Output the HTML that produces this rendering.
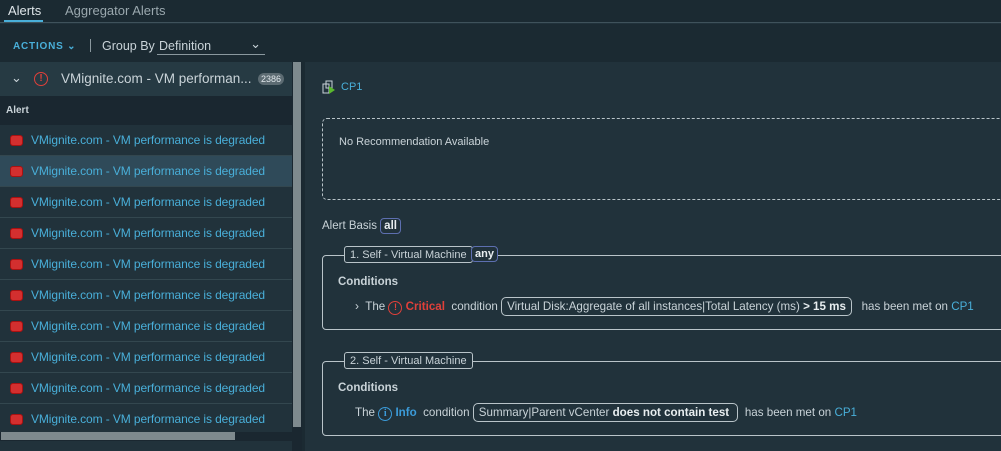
<!DOCTYPE html>
<html><head><meta charset="utf-8"><style>
*{box-sizing:border-box;margin:0;padding:0}
body{width:1001px;height:451px;overflow:hidden;background:#21323b;font-family:"Liberation Sans",sans-serif;color:#c9d3d8;font-size:12px;position:relative}
.abs{position:absolute}
.link{color:#49afd9}
.row{position:absolute;left:0;width:292px;height:31px;border-bottom:1px solid #33474f;background:#21323b}
.row .sq{position:absolute;left:10px;top:10px;width:13px;height:11px;background:#d32f2f;border-radius:3px;border:1px solid #a11}
.row span{position:absolute;left:31px;top:8px;font-size:12px;color:#49afd9;letter-spacing:-.1px}
.box{position:absolute;border:1px solid #b9c4c9;border-radius:4px}
.lbl{position:absolute;border:1px solid #b9c4c9;border-radius:3px;background:#21323b;font-size:11px;padding:1px 5px;color:#c9d3d8;height:17px;line-height:14px}
.pill{border:1px solid #b9c4c9;border-radius:5px;padding:2px 5px}
b{color:#e8eef0}
</style></head><body>
<div class="abs" style="left:0;top:0;width:1001px;height:23px;background:#1b2a32;border-bottom:1px solid #3f525b"></div>
<div class="abs" style="left:8px;top:3px;font-size:13px;color:#dfe6ea">Alerts</div>
<div class="abs" style="left:4px;top:20px;width:39px;height:2px;background:#49afd9"></div>
<div class="abs" style="left:65px;top:3px;font-size:13px;color:#9aa8ae">Aggregator Alerts</div>
<div class="abs" style="left:0;top:24px;width:1001px;height:38px;background:#1b2a32"></div>
<div class="abs" style="left:13px;top:41px;font-size:10px;font-weight:bold;letter-spacing:.8px;color:#49afd9">ACTIONS ⌄</div>
<div class="abs" style="left:90px;top:39px;width:1px;height:13px;background:#8a989e"></div>
<div class="abs" style="left:102px;top:39px;font-size:12.5px;color:#c9d3d8">Group By</div>
<div class="abs" style="left:157px;top:39px;width:108px;height:16px;border-bottom:1px solid #8a989e;font-size:12.5px;padding-left:2px">Definition<span style="position:absolute;right:4px;top:-3px;font-size:13px">⌄</span></div>
<div class="abs" style="left:0;top:62px;width:292px;height:34px;background:#263a43"></div>
<div class="abs" style="left:11px;top:70px;font-size:13px;color:#c9d3d8">⌄</div>
<div class="abs" style="left:34px;top:72px;width:14px;height:14px;border:1.5px solid #e0403a;border-radius:50%;color:#e0403a;font-size:10px;font-weight:bold;text-align:center;line-height:11px">!</div>
<div class="abs" style="left:61px;top:71px;font-size:13.5px;color:#c9d3d8">VMignite.com - VM performan...</div>
<div class="abs" style="left:258px;top:73px;width:26px;height:12px;border-radius:6px;background:#5c6b72;color:#dfe6ea;font-size:9px;text-align:center;line-height:12px">2386</div>
<div class="abs" style="left:0;top:96px;width:292px;height:29px;background:#1a2730"></div>
<div class="abs" style="left:6px;top:105px;font-size:10px;font-weight:bold;color:#c9d3d8">Alert</div>
<div class="row" style="top:125px"><i class="sq"></i><span>VMignite.com - VM performance is degraded</span></div>
<div class="row" style="top:156px;background:#2f4a59"><i class="sq"></i><span>VMignite.com - VM performance is degraded</span></div>
<div class="row" style="top:187px"><i class="sq"></i><span>VMignite.com - VM performance is degraded</span></div>
<div class="row" style="top:218px"><i class="sq"></i><span>VMignite.com - VM performance is degraded</span></div>
<div class="row" style="top:249px"><i class="sq"></i><span>VMignite.com - VM performance is degraded</span></div>
<div class="row" style="top:280px"><i class="sq"></i><span>VMignite.com - VM performance is degraded</span></div>
<div class="row" style="top:311px"><i class="sq"></i><span>VMignite.com - VM performance is degraded</span></div>
<div class="row" style="top:342px"><i class="sq"></i><span>VMignite.com - VM performance is degraded</span></div>
<div class="row" style="top:373px"><i class="sq"></i><span>VMignite.com - VM performance is degraded</span></div>
<div class="row" style="top:404px"><i class="sq"></i><span>VMignite.com - VM performance is degraded</span></div>
<div class="abs" style="left:0;top:432px;width:292px;height:9px;background:#1a2730"></div>
<div class="abs" style="left:1px;top:432px;width:234px;height:8px;background:#7e8a8e"></div>
<div class="abs" style="left:292px;top:62px;width:10px;height:389px;background:#1a2730"></div>
<div class="abs" style="left:293px;top:62px;width:8px;height:365px;background:#7e8a8e"></div>
<div class="abs" style="left:302px;top:62px;width:3px;height:389px;background:#1b2a32"></div>
<svg class="abs" style="left:322px;top:80px" width="14" height="14" viewBox="0 0 14 14"><rect x="1" y="4" width="6" height="9" fill="none" stroke="#c9d3d8"/><rect x="4" y="1" width="6" height="7" fill="none" stroke="#c9d3d8"/><path d="M7 6 L13 10 L7 14Z" fill="#5ab82e"/></svg>
<div class="abs link" style="left:341px;top:81px;font-size:11px">CP1</div>
<div class="abs" style="left:322px;top:118px;width:690px;height:82px;border:1px dashed #b9c4c9;border-radius:5px"></div>
<div class="abs" style="left:339px;top:136px;font-size:11px">No Recommendation Available</div>
<div class="abs" style="left:322px;top:220px;font-size:11.5px">Alert Basis <span style="border:1px solid #5d6fb0;border-radius:4px;padding:1px 3px;font-weight:bold;color:#e8eef0">all</span></div>
<div class="box" style="left:322px;top:255px;width:690px;height:75px"></div>
<div class="lbl" style="left:344px;top:246px">1. Self - Virtual Machine</div>
<div class="abs" style="left:471px;top:246px;border:1px solid #5d6fb0;border-radius:4px;padding:1px 3px;font-size:11px;font-weight:bold;color:#e8eef0;background:#21323b">any</div>
<div class="abs" style="left:338px;top:276px;font-size:11.5px;font-weight:bold">Conditions</div>
<div class="abs" style="left:355px;top:299px;font-size:11.6px;white-space:nowrap;line-height:15px">
<span style="font-size:12px">›</span>&nbsp; The <span style="display:inline-block;width:14px;height:14px;border:1.5px solid #e0403a;border-radius:50%;color:#e0403a;font-size:9px;font-weight:bold;text-align:center;line-height:11px">!</span> <span style="color:#e0403a;font-weight:bold">Critical</span>&nbsp; condition <span class="pill">Virtual Disk:Aggregate of all instances|Total Latency (ms) <b>&gt; 15 ms</b></span>&nbsp;&nbsp; has been met on <span class="link">CP1</span></div>
<div class="box" style="left:322px;top:361px;width:690px;height:75px"></div>
<div class="lbl" style="left:344px;top:352px">2. Self - Virtual Machine</div>
<div class="abs" style="left:338px;top:382px;font-size:11.5px;font-weight:bold">Conditions</div>
<div class="abs" style="left:355px;top:405px;font-size:11.6px;white-space:nowrap;line-height:15px">The <span style="display:inline-block;width:14px;height:14px;border:1.5px solid #3b9bd9;border-radius:50%;color:#3b9bd9;font-size:10px;font-weight:bold;text-align:center;line-height:11px;font-family:'Liberation Serif',serif">i</span> <span style="color:#3b9bd9;font-weight:bold">Info</span>&nbsp; condition <span class="pill">Summary|Parent vCenter <b>does not contain test</b>&nbsp;</span>&nbsp; has been met on <span class="link">CP1</span></div>
</body></html>
